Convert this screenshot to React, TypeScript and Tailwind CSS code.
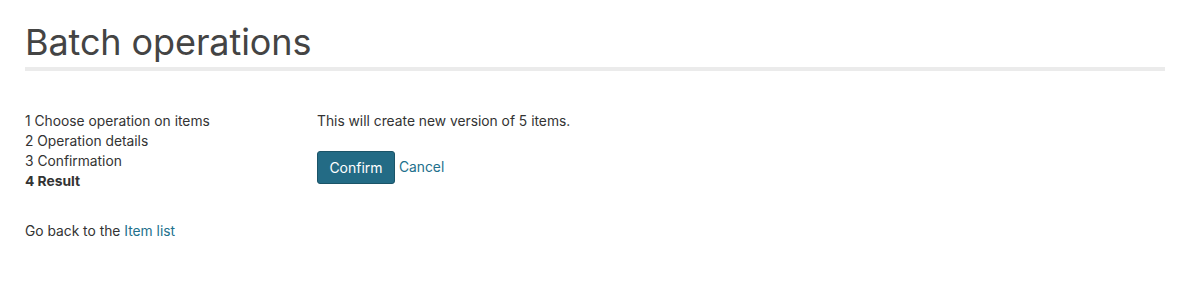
import React from 'react'

export default function App() {
  const steps = ['1 Choose operation on items', '2 Operation details', '3 Confirmation']

  return (
    <div className="bg-white min-h-[299px] px-[25px] pt-[20px] text-[#333] font-['Inter',sans-serif]">
      {/* Page heading */}
      <h1 className="text-[36px] leading-[44px] text-[#444] tracking-[-0.1px] pb-[3px] border-b-4 border-[#ebebeb] w-[1140px]">
        Batch operations
      </h1>

      <div className="flex mt-[40px] text-[13.8px] leading-[20px]">
        {/* Steps sidebar */}
        <div className="w-[292px]">
          <ol>
            {steps.map((s) => (
              <li key={s}>{s}</li>
            ))}
            <li className="font-bold">4 Result</li>
          </ol>
          <p className="mt-[30px]">
            Go back to the <a className="text-[#22708c]" href="#">Item list</a>
          </p>
        </div>

        {/* Result panel */}
        <div>
          <p>This will create new version of 5 items.</p>
          <div className="flex items-center gap-[4px] mt-[20px]">
            <button className="h-[33px] w-[78px] rounded-[3px] bg-[#236b85] border border-[#1b5468] text-white text-[14px]">
              Confirm
            </button>
            <a className="text-[#22708c] -mt-[2px]" href="#">Cancel</a>
          </div>
        </div>
      </div>
    </div>
  )
}
